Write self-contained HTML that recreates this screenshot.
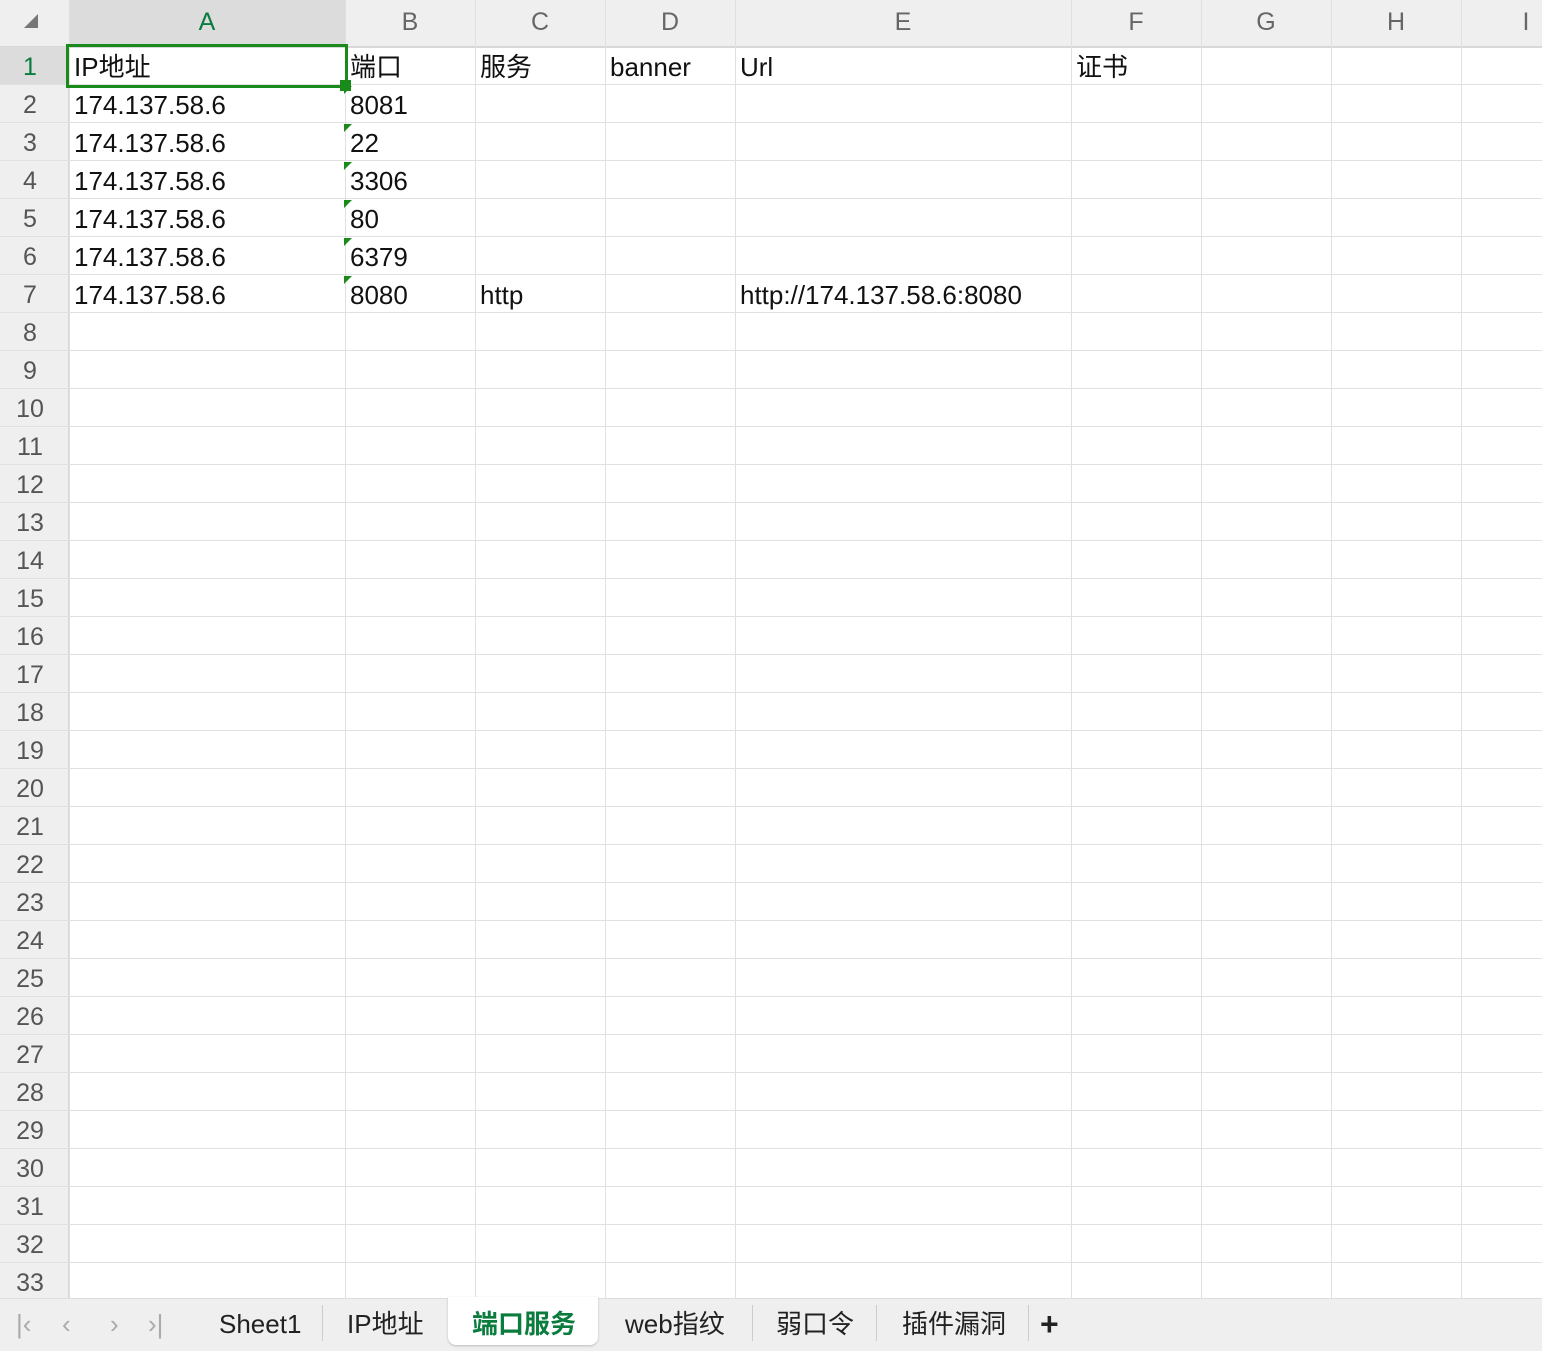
<!DOCTYPE html>
<html><head><meta charset="utf-8"><style>
body{margin:0;width:1542px;height:1350px;overflow:hidden;background:#fff;position:relative;font-family:"Liberation Sans","Noto Sans CJK SC",sans-serif;}
.hl{position:absolute;left:0;width:1542px;height:1px;background:#e0e0e0}
.vl{position:absolute;top:0;height:1298px;width:1px;background:#e0e0e0}
.ch{position:absolute;top:0;height:46px;background:#efefef;border-bottom:2px solid #d8d8d8;}
.rh{position:absolute;left:0;top:47px;width:68px;height:1251px;background:#efefef;border-right:2px solid #d8d8d8}
.t{position:absolute;font-size:26px;color:#111;line-height:40px;white-space:nowrap}
.cl{position:absolute;top:0;line-height:44px;font-size:25px;color:#666;text-align:center}
.rl{position:absolute;left:0;width:60px;text-align:center;font-size:25px;color:#555;line-height:40px}
.tri{position:absolute;width:0;height:0;border-top:8px solid #1a8a1a;border-right:8px solid transparent}
.tabs{position:absolute;left:0;top:1298px;width:1542px;height:52px;background:#efefef;border-top:1px solid #ddd}
.tab{position:absolute;top:0;line-height:50px;font-size:26px;color:#222}
.sep{position:absolute;top:6px;width:1px;height:36px;background:#ccc}
</style></head><body>
<div class="ch" style="left:0;width:1542px"></div>
<div class="ch" style="left:69px;width:276px;background:#dcdcdc"></div>
<div class="rh"></div>
<div style="position:absolute;left:0;top:47px;width:68px;height:38px;background:#dcdcdc"></div>
<div id="lines"></div>
<script>
var s='';
for(var y=84;y<1298;y+=38){s+='<div class="hl" style="top:'+y+'px"></div>';}
var xs=[69,345,475,605,735,1071,1201,1331,1461];
xs.forEach(function(x){s+='<div class="vl" style="left:'+x+'px"></div>';});
for(var i=1;i<=33;i++){s+='<div class="rl" style="top:'+(47+(i-1)*38)+'px'+(i==1?';color:#0a7d3e':'')+'">'+i+'</div>';}
document.getElementById('lines').innerHTML=s;
</script>
<div style="position:absolute;left:24px;top:14px;width:0;height:0;border-bottom:14px solid #777;border-left:14px solid transparent"></div>
<div class="cl" style="left:69px;width:276px;color:#0a7d3e">A</div>
<div class="cl" style="left:345px;width:130px">B</div>
<div class="cl" style="left:475px;width:130px">C</div>
<div class="cl" style="left:605px;width:130px">D</div>
<div class="cl" style="left:735px;width:336px">E</div>
<div class="cl" style="left:1071px;width:130px">F</div>
<div class="cl" style="left:1201px;width:130px">G</div>
<div class="cl" style="left:1331px;width:130px">H</div>
<div class="cl" style="left:1520px;width:12px">I</div>

<div class="t" style="left:74px;top:47px">IP地址</div>
<div class="t" style="left:350px;top:47px">端口</div>
<div class="t" style="left:480px;top:47px">服务</div>
<div class="t" style="left:610px;top:47px">banner</div>
<div class="t" style="left:740px;top:47px">Url</div>
<div class="t" style="left:1076px;top:47px">证书</div>

<div class="t" style="left:74px;top:85px">174.137.58.6</div><div class="t" style="left:350px;top:85px">8081</div>
<div class="t" style="left:74px;top:123px">174.137.58.6</div><div class="t" style="left:350px;top:123px">22</div>
<div class="t" style="left:74px;top:161px">174.137.58.6</div><div class="t" style="left:350px;top:161px">3306</div>
<div class="t" style="left:74px;top:199px">174.137.58.6</div><div class="t" style="left:350px;top:199px">80</div>
<div class="t" style="left:74px;top:237px">174.137.58.6</div><div class="t" style="left:350px;top:237px">6379</div>
<div class="t" style="left:74px;top:275px">174.137.58.6</div><div class="t" style="left:350px;top:275px">8080</div>
<div class="t" style="left:480px;top:275px">http</div><div class="t" style="left:740px;top:275px">http://174.137.58.6:8080</div>

<div class="tri" style="left:344px;top:86px"></div>
<div class="tri" style="left:344px;top:124px"></div>
<div class="tri" style="left:344px;top:162px"></div>
<div class="tri" style="left:344px;top:200px"></div>
<div class="tri" style="left:344px;top:238px"></div>
<div class="tri" style="left:344px;top:276px"></div>

<div style="position:absolute;left:66px;top:44px;width:276px;height:38px;border:3px solid #1a8a1a"></div>
<div style="position:absolute;left:340px;top:80px;width:11px;height:11px;background:#1a8a1a"></div>

<div class="tabs">
<div class="tab" style="left:16px;color:#aaa">|‹</div>
<div class="tab" style="left:62px;color:#aaa">‹</div>
<div class="tab" style="left:110px;color:#aaa">›</div>
<div class="tab" style="left:148px;color:#aaa">›|</div>
<div class="tab" style="left:219px">Sheet1</div>
<div class="sep" style="left:322px"></div>
<div class="tab" style="left:347px">IP地址</div>
<div style="position:absolute;left:448px;top:-2px;width:150px;height:48px;background:#fff;border-radius:0 0 8px 8px;box-shadow:0 1px 2px #bbb"></div>
<div class="tab" style="left:472px;color:#0a7d3e;font-weight:bold">端口服务</div>
<div class="tab" style="left:625px">web指纹</div>
<div class="sep" style="left:752px"></div>
<div class="tab" style="left:776px">弱口令</div>
<div class="sep" style="left:876px"></div>
<div class="tab" style="left:902px">插件漏洞</div>
<div class="sep" style="left:1028px"></div>
<div class="tab" style="left:1040px;font-size:32px;font-weight:bold">+</div>
</div>
</body></html>
